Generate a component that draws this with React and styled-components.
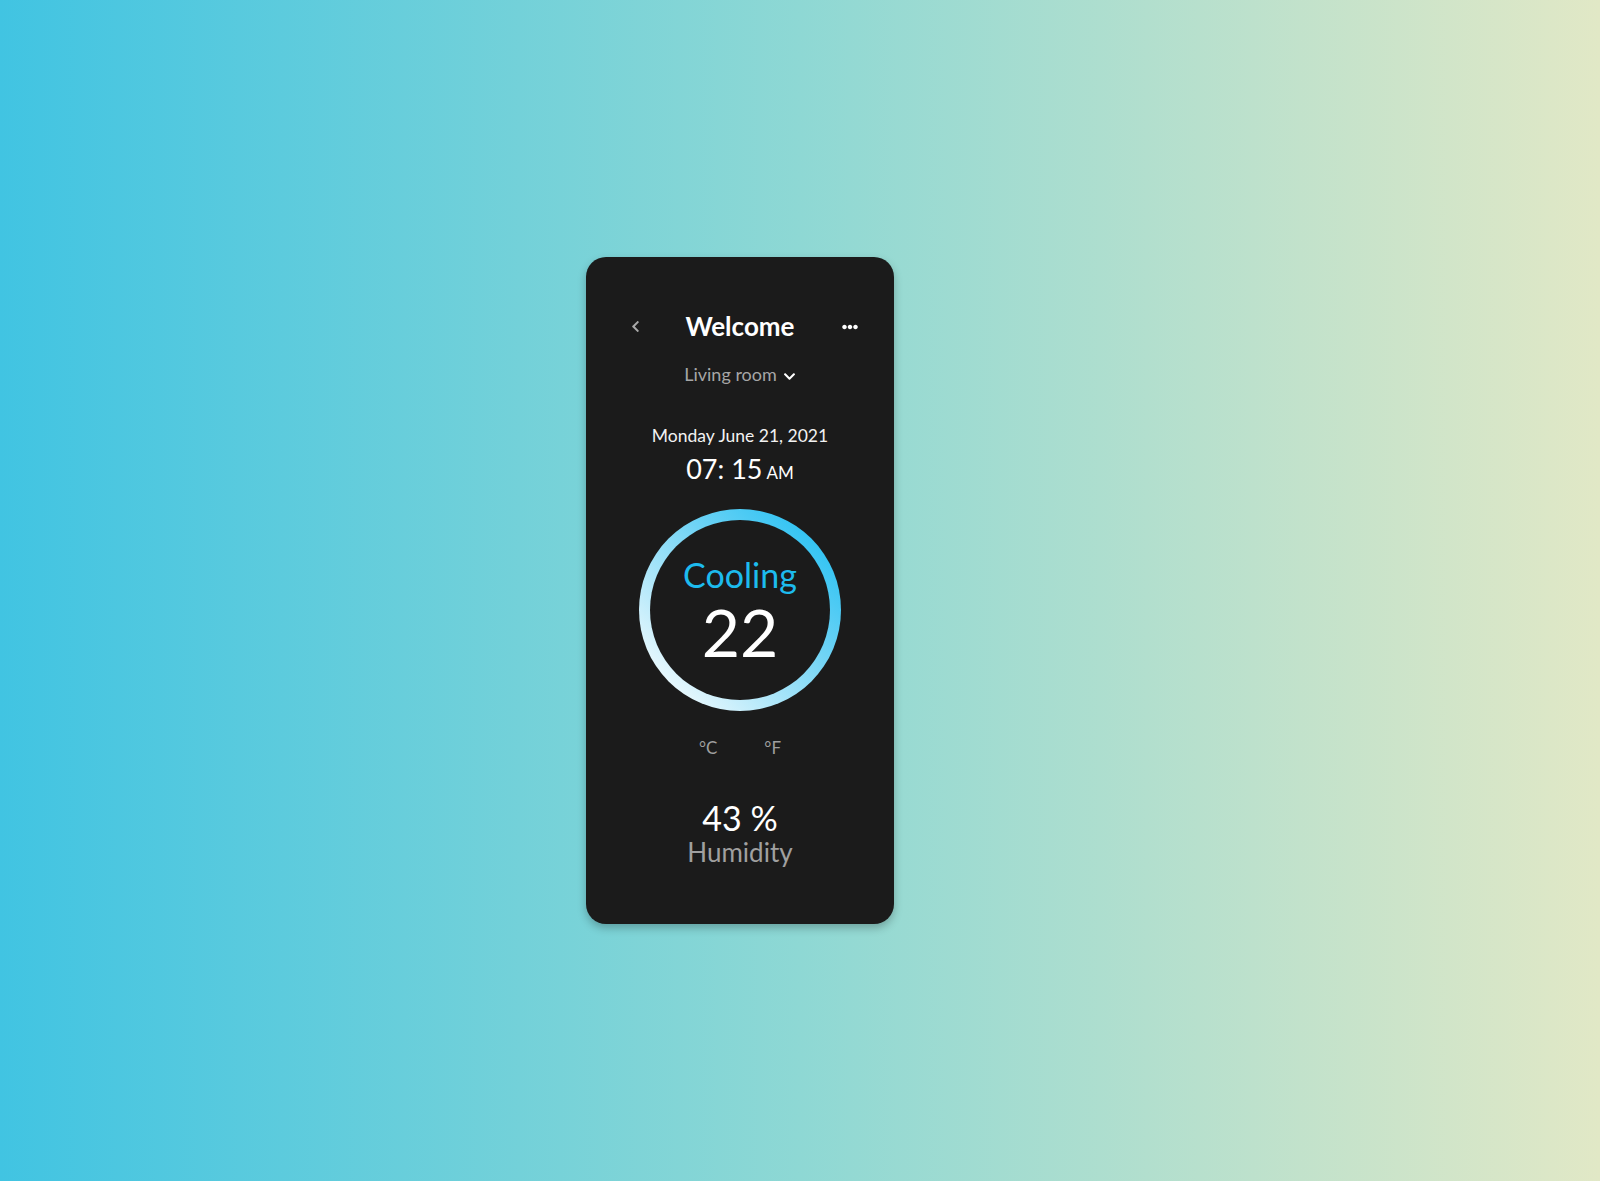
import React from "react";
import styled, { createGlobalStyle } from "styled-components";
import { FaChevronLeft, FaChevronDown, FaEllipsisH } from "react-icons/fa";

const Global = createGlobalStyle`
  html, body { margin: 0; padding: 0; background: #fff; }
  body { font-family: Lato, "Noto Sans", sans-serif; }
  * { box-sizing: border-box; }
`;

const Page = styled.div`
  height: 1181px;
  background: linear-gradient(to right, #41c4e2 0%, #8ed8d4 50%, #e1e8c6 100%);
  display: flex;
  align-items: center;
  justify-content: center;
  padding-right: 120px;
  box-shadow: 0 2px 3px rgba(0, 0, 0, 0.22);
`;

const Card = styled.div`
  width: 308px;
  height: 667px;
  background: #1b1b1b;
  border-radius: 20px;
  box-shadow: 0 4px 8px rgba(0, 0, 0, 0.25);
  padding-top: 54px;
  display: flex;
  flex-direction: column;
  align-items: center;
  color: #fff;
`;

const Header = styled.div`
  width: 100%;
  display: grid;
  grid-template-columns: 1fr auto 1fr;
  align-items: center;
  padding: 0 36px;
`;

const IconSlot = styled.div`
  display: flex;
  justify-content: ${(p) => (p.$end ? "flex-end" : "flex-start")};
  padding-left: ${(p) => p.$inset || 0}px;
  color: ${(p) => p.$color};
  line-height: 0;
`;

const Title = styled.h1`
  margin: 0;
  font-size: 26px;
  font-weight: 700;
  line-height: 1.2;
  color: #fff;
`;

const RoomSelect = styled.div`
  margin-top: 22px;
  display: flex;
  align-items: center;
  gap: 6px;
  font-size: 18px;
  line-height: 1.2;
  color: #a6a6a6;
  svg { color: #fff; margin-top: 4px; }
`;

const DateText = styled.div`
  margin-top: 39px;
  font-size: 17.5px;
  line-height: 1.2;
  color: #f2f2f2;
`;

const Time = styled.div`
  margin-top: 7px;
  font-size: 27px;
  line-height: 1.2;
  color: #fff;
`;

const Meridiem = styled.span`
  font-size: 17px;
  margin-left: 4px;
`;

const Ring = styled.div`
  margin-top: 24px;
  width: 202px;
  height: 202px;
  border-radius: 50%;
  padding: 11px;
  background: linear-gradient(to bottom left, #14bcf2 0%, #6fd3f5 40%, #ffffff 95%);
`;

const RingInner = styled.div`
  width: 100%;
  height: 100%;
  border-radius: 50%;
  background: #1b1b1b;
  display: flex;
  flex-direction: column;
  align-items: center;
  justify-content: center;
  gap: 4px;
`;

const Mode = styled.div`
  font-size: 34px;
  line-height: 40px;
  color: #1dbbee;
`;

const Temp = styled.div`
  font-size: 66px;
  line-height: 66px;
  color: #fff;
`;

const Units = styled.div`
  margin-top: 27px;
  display: flex;
  gap: 47px;
  font-size: 17px;
  line-height: 1.2;
  color: #9f9f9f;
`;

const HumidityValue = styled.div`
  margin-top: 39px;
  font-size: 34px;
  line-height: 1.2;
  color: #fff;
`;

const HumidityLabel = styled.div`
  margin-top: -1px;
  font-size: 26px;
  line-height: 1.2;
  color: #a0a0a0;
`;

export default function App() {
  return (
    <>
      <Global />
      <Page>
        <Card>
          <Header>
            <IconSlot $color="#a9a9a9" $inset={7}>
              <FaChevronLeft size={13} />
            </IconSlot>
            <Title>Welcome</Title>
            <IconSlot $end $color="#ffffff">
              <FaEllipsisH size={16} />
            </IconSlot>
          </Header>
          <RoomSelect>
            Living room <FaChevronDown size={13} />
          </RoomSelect>
          <DateText>Monday June 21, 2021</DateText>
          <Time>
            07: 15<Meridiem>AM</Meridiem>
          </Time>
          <Ring>
            <RingInner>
              <Mode>Cooling</Mode>
              <Temp>22</Temp>
            </RingInner>
          </Ring>
          <Units>
            <span>°C</span>
            <span>°F</span>
          </Units>
          <HumidityValue>43 %</HumidityValue>
          <HumidityLabel>Humidity</HumidityLabel>
        </Card>
      </Page>
    </>
  );
}
